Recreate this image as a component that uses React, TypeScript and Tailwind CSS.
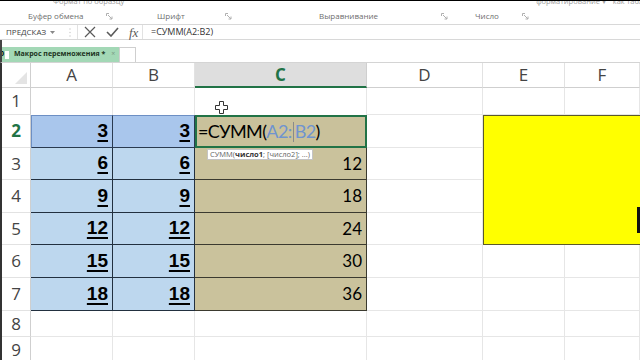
import React from "react";

const UI = "font-['Open_Sans','Noto_Sans',sans-serif]";
const CELL = "font-['Lato','Open_Sans',sans-serif]";

function Launcher() {
  return (
    <svg width="7" height="7" viewBox="0 0 7 7" className="shrink-0">
      <path d="M0.5 3 V0.5 H3" stroke="#b0b0b0" strokeWidth="1" fill="none" />
      <path d="M2 2 L6 6 M6 3.5 V6 H3.5" stroke="#b0b0b0" strokeWidth="1" fill="none" />
    </svg>
  );
}

const colHdr = `flex items-center justify-center border-r border-b border-r-[#e2e2e2] border-b-[#cfcfcf] text-[17px] text-[#444] ${UI}`;
const rowHdr = `flex items-center justify-center border-r border-b border-r-[#cfcfcf] border-b-[#e2e2e2] text-[17px] text-[#444] ${UI}`;
const empty = "border-r border-b border-[#e6e6e6]";
const blueNum = "flex items-center justify-end pr-[4px] text-[19px] font-bold underline decoration-2 underline-offset-[3px] text-black font-['Liberation_Sans',Arial,sans-serif]";
const tanNum = `flex items-center justify-end pr-[4px] text-[17px] text-black ${CELL}`;

export default function App() {
  const rows = [
    { n: 3, a: 6, c: 12 },
    { n: 4, a: 9, c: 18 },
    { n: 5, a: 12, c: 24 },
    { n: 6, a: 15, c: 30 },
    { n: 7, a: 18, c: 36 },
  ];
  return (
    <div className="w-[640px] h-[360px] overflow-hidden relative bg-white flex flex-col">
      {/* top cropped ribbon row */}
      <div className={`h-[8px] shrink-0 border-t border-black overflow-hidden flex items-start text-[7.5px] text-[#a0a0a0] whitespace-nowrap ${UI}`}>
        <span className="ml-[53px] -mt-[5px] leading-[11px]">Формат по образцу</span>
        <span className="ml-[412px] -mt-[5px] leading-[11px]">форматирование ▾</span>
        <span className="ml-[7px] -mt-[5px] leading-[11px]">как таблицу ▾</span>
      </div>
      {/* group labels */}
      <div className={`h-[17px] shrink-0 flex items-center border-b border-[#d8d8d8] text-[8px] text-[#6e6e6e] whitespace-nowrap ${UI}`}>
        <span className="w-[106px] pl-[28px]">Буфер обмена</span>
        <Launcher />
        <span className="w-[44px]" />
        <span className="w-[68px]">Шрифт</span>
        <Launcher />
        <span className="w-[87px]" />
        <span className="w-[122px]">Выравнивание</span>
        <Launcher />
        <span className="w-[27px]" />
        <span className="w-[47px]">Число</span>
        <Launcher />
      </div>
      {/* formula bar */}
      <div className={`h-[15px] shrink-0 flex items-center border-b border-[#d8d8d8] text-[8px] text-[#444] whitespace-nowrap ${UI}`}>
        <div className="w-[62px] flex items-center">
          <span className="pl-[6px] w-[50px]">ПРЕДСКАЗ</span>
          <svg width="5" height="3" viewBox="0 0 5 3"><path d="M0 0 H5 L2.5 3 Z" fill="#888" /></svg>
        </div>
        <div className="w-[15px] flex justify-center">
          <svg width="2" height="9" viewBox="0 0 2 9">
            <circle cx="1" cy="1" r="0.7" fill="#c8c8c8" />
            <circle cx="1" cy="4.5" r="0.7" fill="#c8c8c8" />
            <circle cx="1" cy="8" r="0.7" fill="#c8c8c8" />
          </svg>
        </div>
        <div className="w-[65px] h-full flex items-center border-l border-[#e2e2e2] pl-[6px] gap-[10px]">
          <svg width="12" height="12" viewBox="0 0 12 12">
            <path d="M1 1 L11 11 M11 1 L1 11" stroke="#5a5a5a" strokeWidth="1.2" />
          </svg>
          <svg width="13" height="10" viewBox="0 0 13 10">
            <path d="M1 5 L5 9 L12 1" stroke="#5a5a5a" strokeWidth="1.6" fill="none" />
          </svg>
          <span className="text-[13px] italic text-[#5a5a5a] font-['Liberation_Serif',serif] leading-none">fx</span>
        </div>
        <div className="flex-1 h-full flex items-center border-l border-[#e2e2e2] pl-[8px] text-[9px] text-[#333]">
          =СУММ(A2:B2)
        </div>
      </div>
      {/* sheet tab bar */}
      <div className={`h-[23px] shrink-0 flex items-end border-b border-[#d4d4d4] border-l-2 border-l-[#444] whitespace-nowrap ${UI}`}>
        <div className="w-[117px] h-[15px] bg-[#a3d8b6] flex items-center text-[7px] overflow-hidden">
          <span className="text-black font-bold -ml-[2px]">0</span>
          <span className="w-[4px] h-[8px] bg-white ml-[1px] shrink-0" />
          <span className="ml-[5px] font-bold text-[#1c3321]">Макрос перемножения *</span>
          <span className="ml-[6px] text-[#7a9a84]">×</span>
        </div>
        <div className="w-[17px] h-[15px] border border-[#cfcfcf] border-b-0 bg-white" />
      </div>
      {/* grid */}
      <div className="flex-1 relative border-l-2 border-l-[#333] border-b-2 border-b-black">
        <div className="grid grid-cols-[29px_82px_82px_172px_116px_82px_1fr] grid-rows-[25px_27px_33px_32px_33px_32px_33px_33px_26px_26px]">
          {/* yellow block */}
          <div className="col-start-6 col-span-2 row-start-3 row-span-4 bg-[#ffff00] border border-r-0 border-[#5b5a2a]" />

          {/* header row */}
          <div className="border-r border-b border-r-[#cfcfcf] border-b-[#cfcfcf] flex items-end justify-end p-[3px]">
            <svg width="12" height="12" viewBox="0 0 12 12"><path d="M12 0 V12 H0 Z" fill="#e4e4e4" /></svg>
          </div>
          <div className={colHdr}>A</div>
          <div className={colHdr}>B</div>
          <div className={`flex items-center justify-center bg-[#dedede] border-r border-r-[#cfcfcf] border-b-2 border-b-[#217346] text-[17px] font-bold text-[#217346] ${UI}`}>C</div>
          <div className={colHdr}>D</div>
          <div className={colHdr}>E</div>
          <div className={colHdr}>F</div>

          {/* row 1 */}
          <div className={rowHdr}>1</div>
          <div className="border-r border-[#e6e6e6]" />
          <div className="border-r border-[#e6e6e6]" />
          <div className="border-r border-[#e6e6e6]" />
          <div className={empty} />
          <div className={empty} />
          <div className={empty} />

          {/* row 2 */}
          <div className={`${rowHdr} font-bold text-[#217346]`}>2</div>
          <div className={`${blueNum} bg-[#a9c6ec] border border-[#6d8fc4] border-r-[#2a3a50] border-b-[#2a3a50]`}>3</div>
          <div className={`${blueNum} bg-[#a9c6ec] border-t border-r border-b border-[#6d8fc4] border-r-[#2a3a50] border-b-[#2a3a50]`}>3</div>
          <div className={`relative flex items-center pl-[1px] bg-[#c9c19b] border-2 border-[#217346] text-[18px] text-black tracking-[-0.6px] ${CELL}`}>
            <span>=СУММ(</span>
            <span className="text-[#6f94cf]">A2:</span>
            <span className="w-px h-[20px] bg-[#8a8a8a] mx-[1px]" />
            <span className="text-[#6f94cf]">B2</span>
            <span>)</span>
            <div className={`absolute left-[10px] top-[32px] z-10 h-[11px] px-[2px] bg-white border border-[#c4c4c4] flex items-center text-[7.5px] tracking-normal text-[#666] whitespace-nowrap ${UI}`}>
              СУММ(<b className="text-[#333]">число1</b>; [число2]; ...)
            </div>
          </div>
          <div className={empty} />

          {/* rows 3..7 */}
          {rows.map((r) => (
            <React.Fragment key={r.n}>
              <div className={rowHdr}>{r.n}</div>
              <div className={`${blueNum} bg-[#bdd7ee] border-r border-b border-[#22303f]`}>{r.a}</div>
              <div className={`${blueNum} bg-[#bdd7ee] border-r border-b border-[#22303f]`}>{r.a}</div>
              <div className={`${tanNum} bg-[#cac29c] border-r border-b border-[#3b3a2f]`}>{r.c}</div>
              <div className={empty} />
              {r.n > 5 && <div className={empty} />}
              {r.n > 5 && <div className={empty} />}
            </React.Fragment>
          ))}

          {/* rows 8, 9 */}
          {[8, 9].map((n) => (
            <React.Fragment key={n}>
              <div className={rowHdr}>{n}</div>
              <div className={empty} />
              <div className={empty} />
              <div className={empty} />
              <div className={empty} />
              <div className={empty} />
              <div className={empty} />
            </React.Fragment>
          ))}
        </div>

        {/* mouse cursor */}
        <svg className="absolute left-[213px] top-[38px]" width="13" height="13" viewBox="0 0 13 13">
          <path d="M4.5 0.5 H8.5 V4.5 H12.5 V8.5 H8.5 V12.5 H4.5 V8.5 H0.5 V4.5 H4.5 Z" fill="#fff" stroke="#333" strokeWidth="1" />
        </svg>
        {/* shape handle on the right edge */}
        <div className="absolute right-0 top-[144px] w-[3px] h-[26px] bg-[#111]" />
      </div>
    </div>
  );
}
